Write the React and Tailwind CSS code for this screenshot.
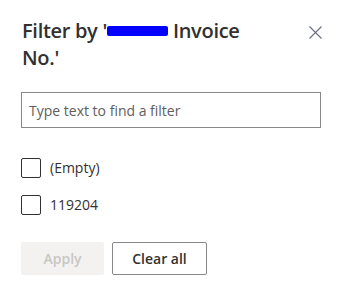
export default function App() {
  const values = ['(Empty)', '119204'];

  return (
    <div
      className="w-[342px] h-[307px] bg-white relative"
      style={{ fontFamily: '"Segoe UI", "Open Sans", "Noto Sans", sans-serif' }}
    >
      {/* Header */}
      <div className="flex items-start justify-between pl-[22px] pr-[20px] pt-[17px]">
        <h2 className="text-[20px] leading-[27px] font-semibold text-[#323130] tracking-[-0.3px]">
          Filter by '<span className="inline-block align-middle w-[61px] h-[10px] bg-[#0000ff] -mt-[3px] rounded-[2px]"></span> Invoice
          <br />
          No.'
        </h2>
        <button className="mt-[9px] text-[#6b6b8a]">
          <svg width="13" height="13" viewBox="0 0 13 13" fill="none" stroke="currentColor" strokeWidth="1.1">
            <path d="M0.5 0.5L12.5 12.5M12.5 0.5L0.5 12.5" />
          </svg>
        </button>
      </div>

      {/* Search */}
      <div className="px-[21px] mt-[21px]">
        <div className="h-[36px] border border-[#8a8886] flex items-center px-[7px]">
          <span className="text-[14px] text-[#605e5c]">Type text to find a filter</span>
        </div>
      </div>

      {/* Values */}
      <div className="px-[21px] mt-[30px] flex flex-col gap-[17px]">
        {values.map((v) => (
          <label key={v} className="flex items-center gap-[9px] h-[20px]">
            <span className="w-[20px] h-[20px] border border-[#323130] rounded-[2px]"></span>
            <span className="text-[14px] leading-[20px] text-[#323130]">{v}</span>
          </label>
        ))}
      </div>

      {/* Actions */}
      <div className="px-[21px] mt-[27px] flex gap-[8px]">
        <button className="w-[83px] h-[33px] bg-[#f3f2f1] rounded-[2px] text-[14px] font-semibold text-[#c8c6c4]">
          Apply
        </button>
        <button className="w-[95px] h-[33px] border border-[#8a8886] rounded-[2px] text-[14px] font-semibold text-[#323130]">
          Clear all
        </button>
      </div>
    </div>
  );
}
